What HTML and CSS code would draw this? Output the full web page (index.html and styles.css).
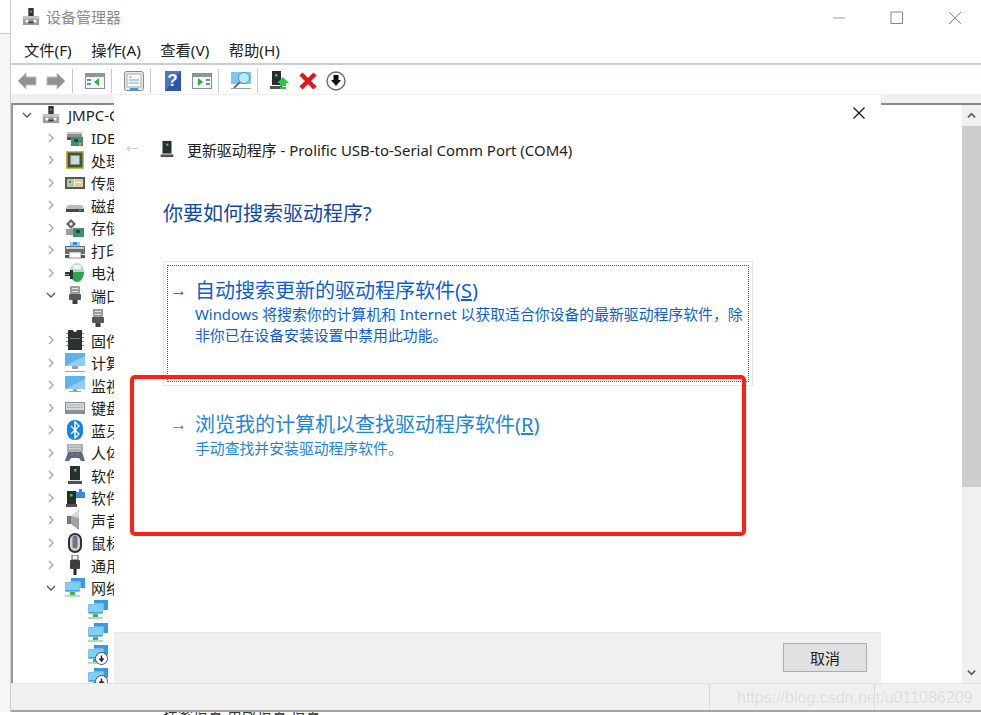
FILE: index.html
```html
<!DOCTYPE html>
<html lang="zh-CN">
<head>
<meta charset="utf-8">
<title>设备管理器</title>
<link rel="stylesheet" href="styles.css">
</head>
<body>
<svg class="defs" width="0" height="0" aria-hidden="true">
  <symbol id="i-pc" viewBox="0 0 20 20">
    <rect x="7" y="0" width="6" height="9" fill="#2f3336"/><rect x="9" y="3" width="2" height="2" fill="#35d04a"/>
    <rect x="1" y="9" width="18" height="10" fill="#9a9c9e"/><rect x="1" y="9" width="18" height="3" fill="#c4c6c8"/>
    <rect x="4" y="13" width="3" height="3" fill="#fff"/><rect x="13" y="13" width="3" height="3" fill="#fff"/><rect x="7" y="15" width="6" height="2" fill="#444"/>
  </symbol>
  <symbol id="i-ide" viewBox="0 0 20 20">
    <path d="M2 4h13l2 3v3H2z" fill="#8d9296"/><rect x="2" y="4" width="15" height="2" fill="#c8cbce"/><rect x="2" y="9" width="10" height="3" fill="#555"/>
    <rect x="6" y="9" width="12" height="9" fill="#3f8f6a"/><rect x="9" y="11" width="4" height="3" fill="#1c4f3a"/><rect x="14" y="15" width="2" height="2" fill="#d9b440"/>
  </symbol>
  <symbol id="i-cpu" viewBox="0 0 20 20">
    <rect x="1" y="1" width="18" height="18" fill="#e0ad3a"/><rect x="2.5" y="2.5" width="15" height="15" fill="#2e5f45"/><rect x="5.5" y="5.5" width="9" height="9" fill="#d2d5d3"/>
  </symbol>
  <symbol id="i-sensor" viewBox="0 0 20 20">
    <rect x="0" y="4" width="20" height="12" fill="#55595c"/><rect x="2" y="6" width="16" height="8" fill="#e3d08a"/><rect x="2" y="6" width="7" height="8" fill="#a7cf9a"/><rect x="9" y="9" width="9" height="1" fill="#fff"/><rect x="9" y="6" width="1" height="8" fill="#fff"/><rect x="4" y="8" width="2" height="2" fill="#d8504c"/>
  </symbol>
  <symbol id="i-disk" viewBox="0 0 20 20">
    <path d="M3 10h14l2 3v4H1v-4z" fill="#babcbe"/><rect x="1" y="14" width="18" height="3" fill="#45484b"/><rect x="14" y="15" width="2" height="1" fill="#5fd06a"/>
  </symbol>
  <symbol id="i-store" viewBox="0 0 20 20">
    <path d="M1 6l5-5 5 5-5 5z" fill="#5e6266"/><path d="M4 6l2-2 2 2-2 2z" fill="#eee"/><path d="M1 11h12v6H1z" fill="#9a9da0"/>
    <rect x="8" y="10" width="11" height="9" fill="#3f8f6a"/><rect x="11" y="12" width="4" height="3" fill="#1c4f3a"/>
  </symbol>
  <symbol id="i-printer" viewBox="0 0 20 20">
    <rect x="5" y="2" width="10" height="5" fill="#8fd0ee"/><rect x="8" y="2" width="4" height="3" fill="#2a8fd8"/><rect x="0" y="6" width="20" height="8" fill="#6b6f73"/><rect x="1" y="7" width="18" height="2" fill="#c9ccce"/><rect x="4" y="12" width="12" height="6" fill="#fff" stroke="#777" stroke-width=".8"/><rect x="0" y="15" width="4" height="3" fill="#555"/><rect x="16" y="15" width="4" height="3" fill="#555"/>
  </symbol>
  <symbol id="i-battery" viewBox="0 0 20 20">
    <ellipse cx="12" cy="9" rx="7" ry="9" fill="#b9d7c2"/><path d="M5 9c0 5 3 10 7 10s7-5 7-10z" fill="#2fa34b"/><ellipse cx="12" cy="4" rx="4.500" ry="2.500" fill="#eef3ef"/>
    <path d="M0 9h5v-2h3v9H5v-3H0v-1.500h4V11H0z" fill="#2e3134"/>
  </symbol>
  <symbol id="i-port" viewBox="0 0 20 20">
    <rect x="5" y="1" width="10" height="8" rx="1" fill="#9a9c9e"/><rect x="7" y="3" width="6" height="1" fill="#e5e6e7"/><rect x="7" y="6" width="6" height="1" fill="#dcdddd"/><rect x="4" y="9" width="12" height="6" rx="1" fill="#55585b"/><rect x="7.500" y="15" width="5" height="4" fill="#3a3d40"/>
  </symbol>
  <symbol id="i-chip" viewBox="0 0 20 20">
    <path d="M3 0h5a2 2 0 0 0 4 0h5v20H3z" fill="#2f3234"/><path d="M1 3h2v1H1zM1 7h2v1H1zM1 11h2v1H1zM1 15h2v1H1zM17 3h2v1h-2zM17 7h2v1h-2zM17 11h2v1h-2zM17 15h2v1h-2z" fill="#8a8d90"/><rect x="5" y="8" width="10" height="1" fill="#777"/>
  </symbol>
  <symbol id="i-monitor" viewBox="0 0 20 20">
    <rect x="0" y="1" width="20" height="13" fill="#8fcdf2"/><path d="M0 1h20v3L0 14z" fill="#5eb4ea"/><rect x="8" y="14" width="4" height="2" fill="#9ba1a5"/><rect x="4" y="16" width="12" height="1" fill="#9ba1a5"/>
  </symbol>
  <symbol id="i-computer" viewBox="0 0 20 20">
    <rect x="0" y="0" width="20" height="13" fill="#8fcdf2"/><path d="M0 0h20v3L0 13z" fill="#5eb4ea"/><rect x="7" y="13" width="6" height="3" fill="#9ba1a5"/><rect x="0" y="18" width="20" height="1" fill="#9ba1a5"/>
  </symbol>
  <symbol id="i-keyboard" viewBox="0 0 20 20">
    <rect x="0" y="4" width="20" height="12" fill="#8b8f93"/><rect x="1" y="5" width="18" height="7" fill="#d6d9db"/><path d="M2 7h16M2 9.500h16" stroke="#8b8f93" stroke-width=".8" stroke-dasharray="1.500 .8"/>
  </symbol>
  <symbol id="i-bt" viewBox="0 0 20 20">
    <rect x="2" y="0" width="16" height="20" rx="7.500" fill="#1283e8"/><path d="M6 6l8 8-4 4V2l4 4-8 8" fill="none" stroke="#fff" stroke-width="1.400"/>
  </symbol>
  <symbol id="i-hid" viewBox="0 0 20 20">
    <rect x="2" y="1" width="16" height="8" fill="#aeb2b6"/><path d="M4 3h12M4 5.500h12" stroke="#e6e7e8" stroke-dasharray="1.500 .8"/>
    <path d="M3 9h14l3 9h-4l-2-3H6l-2 3H0z" fill="#5a6b7c"/><circle cx="7" cy="11" r="1.200" fill="#d8504c"/><circle cx="13" cy="11" r="1.200" fill="#3a8de0"/>
  </symbol>
  <symbol id="i-soft" viewBox="0 0 20 20">
    <rect x="5" y="1" width="10" height="15" fill="#2b2e31"/><rect x="9" y="4" width="2.500" height="2.500" fill="#35d04a"/><rect x="3" y="16" width="14" height="3" fill="#4f5255"/><rect x="5" y="15" width="10" height="1" fill="#ddd"/>
  </symbol>
  <symbol id="i-softp" viewBox="0 0 20 20">
    <rect x="2" y="3" width="9" height="13" fill="#2b2e31"/><rect x="5" y="6" width="2.500" height="2.500" fill="#35d04a"/><rect x="1" y="16" width="11" height="3" fill="#4f5255"/>
    <path d="M11 4h3V1h3v3h3v6h-9z" fill="#2f8ee0"/>
  </symbol>
  <symbol id="i-sound" viewBox="0 0 20 20">
    <path d="M2 6h4l8-6v20l-8-6H2z" fill="#9ea2a6"/><path d="M6 6l8-6v8z" fill="#d6d8da"/><rect x="2" y="6" width="4" height="8" fill="#76797c"/>
  </symbol>
  <symbol id="i-mouse" viewBox="0 0 20 20">
    <rect x="3" y="0" width="14" height="20" rx="7" fill="#2e3134"/><rect x="5" y="2" width="10" height="16" rx="5" fill="#cfd2d5"/><rect x="7.500" y="2.500" width="5" height="13" rx="2.500" fill="#6a7580"/>
  </symbol>
  <symbol id="i-usb" viewBox="0 0 20 20">
    <rect x="7" y="0" width="6" height="5" fill="#f0f0f0" stroke="#555"/><rect x="5" y="5" width="10" height="9" rx="1" fill="#3c3f42"/><rect x="8.500" y="14" width="3" height="6" fill="#26282a"/>
  </symbol>
  <symbol id="i-net" viewBox="0 0 20 20">
    <rect x="6" y="0" width="14" height="10" fill="#3a9ae0"/><rect x="0" y="4" width="15" height="10" fill="#3da2e8" stroke="#eef7fd" stroke-width=".7"/><rect x="1" y="5" width="13" height="7" fill="#7fd0f5"/><rect x="5" y="14" width="5" height="3" fill="#3db84e"/><rect x="0" y="17" width="15" height="2" fill="#b9d9bf"/>
  </symbol>
  <symbol id="i-netd" viewBox="0 0 20 20">
    <use href="#i-net"/><circle cx="13.500" cy="13.500" r="6" fill="#fff" stroke="#555"/><path d="M13.500 10.500v4M11.500 13.500l2 2.500 2-2.500" stroke="#222" stroke-width="1.500" fill="none"/>
  </symbol>
  <symbol id="t-back" viewBox="0 0 20 20"><path d="M1 10l8-8v4h10v8H9v4z" fill="#8f9290" stroke="#bcbebc"/></symbol>
  <symbol id="t-forward" viewBox="0 0 20 20"><path d="M19 10l-8-8v4H1v8h10v4z" fill="#8f9290" stroke="#bcbebc"/></symbol>
  <symbol id="t-panelg" viewBox="0 0 20 20"><rect x=".5" y="2.500" width="19" height="15" fill="#f4f6f8" stroke="#8b9096"/><rect x="1" y="3" width="18" height="3" fill="#8f979e"/><rect x="2" y="8" width="4" height="2" fill="#5c93c8"/><rect x="2" y="12" width="4" height="2" fill="#5c93c8"/><path d="M14 7v8l-5-4z" fill="#2fae4b"/></symbol>
  <symbol id="t-props" viewBox="0 0 20 20"><rect x=".5" y=".5" width="19" height="19" rx="2" fill="#e8eaec" stroke="#84888c"/><rect x="3" y="3" width="14" height="13" fill="#fbfcfd" stroke="#a7abb0"/><path d="M5 6h3M5 9h10M5 12h10" stroke="#7aa0c4"/><rect x="6" y="17" width="8" height="2" fill="#2aa3dc"/></symbol>
  <symbol id="t-help" viewBox="0 0 20 20"><rect x="2" y="0" width="16" height="20" fill="#2f55a8"/><path d="M2 0h16L2 20z" fill="#4a74c4"/></symbol>
  <symbol id="t-panelr" viewBox="0 0 20 20"><rect x=".5" y="2.500" width="19" height="15" fill="#f4f6f8" stroke="#8b9096"/><rect x="1" y="3" width="18" height="3" fill="#8f979e"/><rect x="14" y="8" width="4" height="2" fill="#5c93c8"/><rect x="14" y="12" width="4" height="2" fill="#5c93c8"/><path d="M6 7v8l5-4z" fill="#2fae4b"/></symbol>
  <symbol id="t-scan" viewBox="0 0 20 20"><rect x="0" y="1" width="20" height="12" fill="#7ec8ee"/><circle cx="13" cy="7" r="5.500" fill="#bfe6f8" stroke="#4d9ac8"/><path d="M9 11l-6 6" stroke="#6b7075" stroke-width="2"/><rect x="0" y="17" width="20" height="1" fill="#8aa"/></symbol>
  <symbol id="t-update" viewBox="0 0 20 20"><rect x="2" y="0" width="9" height="14" fill="#2b2e31"/><rect x="5" y="3" width="2.500" height="2.500" fill="#35d04a"/><rect x="0" y="15" width="12" height="3" fill="#4f5255"/><path d="M13 6l6 6h-3v3h-6v-3H7z" fill="#2cc84a"/><rect x="10" y="16" width="6" height="2" fill="#2cc84a"/></symbol>
  <symbol id="t-x" viewBox="0 0 20 20"><path d="M3 3l14 14M17 3L3 17" stroke="#e0161c" stroke-width="4.500"/></symbol>
  <symbol id="t-down" viewBox="0 0 20 20"><circle cx="10" cy="10" r="9" fill="#fbfbfb" stroke="#6a6d70" stroke-width="1.400"/><path d="M7.500 4h5v5h2.500l-5 6-5-6h2.500z" fill="#111"/></symbol>
</svg>

<div class="page">
  <div class="strip"></div>
  <div class="window">
    <header class="titlebar">
      <svg class="title-icon"><use href="#i-pc"/></svg>
      <span class="title-text">设备管理器</span>
      <div class="win-controls">
        <svg class="wc" viewBox="0 0 14 14"><path d="M1 7h12" stroke="#9a9a9a"/></svg>
        <svg class="wc" viewBox="0 0 14 14"><rect x="1" y="1" width="11.500" height="11.500" fill="none" stroke="#8a8a8a"/></svg>
        <svg class="wc" viewBox="0 0 14 14"><path d="M1 1l12 12M13 1L1 13" stroke="#8a8a8a"/></svg>
      </div>
    </header>
    <nav class="menubar">
      <span>文件(F)</span><span>操作(A)</span><span>查看(V)</span><span>帮助(H)</span>
    </nav>
    <div class="toolbar">
      <svg class="tool"><use href="#t-back"/></svg>
      <svg class="tool"><use href="#t-forward"/></svg>
      <i class="sep"></i>
      <svg class="tool"><use href="#t-panelg"/></svg>
      <i class="sep"></i>
      <svg class="tool"><use href="#t-props"/></svg>
      <i class="sep"></i>
      <span class="tool help"><svg class="help-bg"><use href="#t-help"/></svg><b class="help-q">?</b></span>
      <svg class="tool"><use href="#t-panelr"/></svg>
      <i class="sep"></i>
      <svg class="tool"><use href="#t-scan"/></svg>
      <i class="sep"></i>
      <svg class="tool tight"><use href="#t-update"/></svg>
      <svg class="tool tight"><use href="#t-x"/></svg>
      <svg class="tool"><use href="#t-down"/></svg>
    </div>
    <div class="band"></div>
    <main class="content">
      <div class="tree">
        <div class="row root"><svg class="chev" viewBox="0 0 10 10"><path d="M1 3l4 4 4-4"/></svg><svg class="ic"><use href="#i-pc"/></svg><span>JMPC-GHK</span></div>
        <div class="row"><svg class="chev" viewBox="0 0 10 10"><path d="M3 1l4 4-4 4"/></svg><svg class="ic"><use href="#i-ide"/></svg><span>IDE ATA/ATAPI 控制器</span></div>
        <div class="row"><svg class="chev" viewBox="0 0 10 10"><path d="M3 1l4 4-4 4"/></svg><svg class="ic"><use href="#i-cpu"/></svg><span>处理器</span></div>
        <div class="row"><svg class="chev" viewBox="0 0 10 10"><path d="M3 1l4 4-4 4"/></svg><svg class="ic"><use href="#i-sensor"/></svg><span>传感器</span></div>
        <div class="row"><svg class="chev" viewBox="0 0 10 10"><path d="M3 1l4 4-4 4"/></svg><svg class="ic"><use href="#i-disk"/></svg><span>磁盘驱动器</span></div>
        <div class="row"><svg class="chev" viewBox="0 0 10 10"><path d="M3 1l4 4-4 4"/></svg><svg class="ic"><use href="#i-store"/></svg><span>存储控制器</span></div>
        <div class="row"><svg class="chev" viewBox="0 0 10 10"><path d="M3 1l4 4-4 4"/></svg><svg class="ic"><use href="#i-printer"/></svg><span>打印队列</span></div>
        <div class="row"><svg class="chev" viewBox="0 0 10 10"><path d="M3 1l4 4-4 4"/></svg><svg class="ic"><use href="#i-battery"/></svg><span>电池</span></div>
        <div class="row"><svg class="chev dark" viewBox="0 0 10 10"><path d="M1 3l4 4 4-4"/></svg><svg class="ic"><use href="#i-port"/></svg><span>端口 (COM 和 LPT)</span></div>
        <div class="row child"><svg class="ic"><use href="#i-port"/></svg></div>
        <div class="row"><svg class="chev" viewBox="0 0 10 10"><path d="M3 1l4 4-4 4"/></svg><svg class="ic"><use href="#i-chip"/></svg><span>固件</span></div>
        <div class="row"><svg class="chev" viewBox="0 0 10 10"><path d="M3 1l4 4-4 4"/></svg><svg class="ic"><use href="#i-computer"/></svg><span>计算机</span></div>
        <div class="row"><svg class="chev" viewBox="0 0 10 10"><path d="M3 1l4 4-4 4"/></svg><svg class="ic"><use href="#i-monitor"/></svg><span>监视器</span></div>
        <div class="row"><svg class="chev" viewBox="0 0 10 10"><path d="M3 1l4 4-4 4"/></svg><svg class="ic"><use href="#i-keyboard"/></svg><span>键盘</span></div>
        <div class="row"><svg class="chev" viewBox="0 0 10 10"><path d="M3 1l4 4-4 4"/></svg><svg class="ic"><use href="#i-bt"/></svg><span>蓝牙</span></div>
        <div class="row"><svg class="chev" viewBox="0 0 10 10"><path d="M3 1l4 4-4 4"/></svg><svg class="ic"><use href="#i-hid"/></svg><span>人体学输入设备</span></div>
        <div class="row"><svg class="chev" viewBox="0 0 10 10"><path d="M3 1l4 4-4 4"/></svg><svg class="ic"><use href="#i-soft"/></svg><span>软件设备</span></div>
        <div class="row"><svg class="chev" viewBox="0 0 10 10"><path d="M3 1l4 4-4 4"/></svg><svg class="ic"><use href="#i-softp"/></svg><span>软件组件</span></div>
        <div class="row"><svg class="chev" viewBox="0 0 10 10"><path d="M3 1l4 4-4 4"/></svg><svg class="ic"><use href="#i-sound"/></svg><span>声音、视频和游戏控制器</span></div>
        <div class="row"><svg class="chev" viewBox="0 0 10 10"><path d="M3 1l4 4-4 4"/></svg><svg class="ic"><use href="#i-mouse"/></svg><span>鼠标和其他指针设备</span></div>
        <div class="row"><svg class="chev" viewBox="0 0 10 10"><path d="M3 1l4 4-4 4"/></svg><svg class="ic"><use href="#i-usb"/></svg><span>通用串行总线控制器</span></div>
        <div class="row"><svg class="chev dark" viewBox="0 0 10 10"><path d="M1 3l4 4 4-4"/></svg><svg class="ic"><use href="#i-net"/></svg><span>网络适配器</span></div>
        <div class="row child"><svg class="ic"><use href="#i-net"/></svg></div>
        <div class="row child"><svg class="ic"><use href="#i-net"/></svg></div>
        <div class="row child"><svg class="ic"><use href="#i-netd"/></svg></div>
        <div class="row child"><svg class="ic"><use href="#i-netd"/></svg></div>
      </div>
      <aside class="scrollbar">
        <svg class="sb-btn" viewBox="0 0 10 10"><path d="M1 7l4-4 4 4"/></svg>
        <div class="sb-track"><div class="sb-thumb"></div></div>
        <svg class="sb-btn" viewBox="0 0 10 10"><path d="M1 3l4 4 4-4"/></svg>
      </aside>
    </main>
    <footer class="statusbar"><i class="status-div"></i><i class="status-div second"></i></footer>
  </div>
</div>
<div class="under">搜索设置 更改设置 设置</div>

<section class="dialog">
  <svg class="dlg-close" viewBox="0 0 12 12"><path d="M.5.5l11 11M11.500.5l-11 11"/></svg>
  <div class="dlg-head">
    <span class="dlg-back">←</span>
    <svg class="dlg-icon"><use href="#i-soft"/></svg>
    <span class="dlg-title">更新驱动程序 - Prolific USB-to-Serial Comm Port (COM4)</span>
  </div>
  <h1 class="dlg-question">你要如何搜索驱动程序?</h1>
  <div class="option focused">
    <div class="option-inner">
      <div class="option-title"><span class="arrow">→</span><span>自动搜索更新的驱动程序软件(<u>S</u>)</span></div>
      <p class="option-desc">Windows 将搜索你的计算机和 Internet 以获取适合你设备的最新驱动程序软件，除非你已在设备安装设置中禁用此功能。</p>
    </div>
  </div>
  <div class="option hover">
    <div class="option-inner">
      <div class="option-title"><span class="arrow">→</span><span>浏览我的计算机以查找驱动程序软件(<u>R</u>)</span></div>
      <p class="option-desc">手动查找并安装驱动程序软件。</p>
    </div>
  </div>
  <div class="dlg-footer"><button class="cancel">取消</button></div>
</section>

<div class="annotation"></div>
<div class="watermark">https://blog.csdn.net/u011086209</div>
</body>
</html>
```
FILE: styles.css
```css
* { box-sizing: border-box; }
html, body { margin: 0; padding: 0; }
body {
  position: relative;
  width: 981px;
  height: 715px;
  overflow: hidden;
  background: #fff;
  font-family: "Noto Sans", "Noto Sans CJK SC", sans-serif;
  color: #1a1a1a;
}
.defs { position: absolute; }
.page { display: flex; height: 712px; }
.strip { width: 10px; margin-top: 33px; background: #f5f6f8; border-top: 1px solid #c9c9c9; }
.window { flex: 1; display: flex; flex-direction: column; min-width: 0; border-left: 1px solid #cfcfcf; background: #fff; }

.titlebar { height: 33px; display: flex; align-items: center; padding-left: 11px; flex: none; }
.title-icon { width: 18px; height: 18px; margin-right: 6px; }
.title-text { font-size: 15px; color: #8c8c8c; }
.win-controls { margin-left: auto; display: flex; gap: 44px; padding-right: 19px; padding-top: 2px; }
.wc { width: 14px; height: 14px; display: block; }

.menubar { height: 32px; display: flex; flex: none; align-items: center; gap: 19.500px; padding: 2px 0 0 13px; font-size: 15.300px; border-bottom: 2px solid #c9ced6; color: #222; }

.toolbar { height: 29px; flex: none; display: flex; align-items: center; padding: 2px 0 0 1px; background: #fff; }
.tool { width: 20px; height: 20px; margin: 0 4.500px; flex: none; display: block; }
.tool.tight { margin-right: 3.500px; }
.sep { width: 1px; height: 24px; background: #c8c8c8; margin: 0 7px 0 2px; flex: none; }
.help { position: relative; background: none; }
.help-bg { width: 20px; height: 20px; display: block; }
.help-q { position: absolute; inset: 0; text-align: center; font: bold 17px/20px "Liberation Sans", sans-serif; color: #fff; }

.band { height: 9px; flex: none; background: #f0f0f0; }

.content { flex: 1; min-height: 0; display: flex; border-top: 2px solid #8a8a8a; border-left: 2px solid #9a9a9a; }
.tree { flex: 1; min-width: 0; overflow: hidden; background: #fff; padding-bottom: 1px; }
.tree .row:first-child { margin-top: -1px; }
.row { height: 22.500px; display: flex; align-items: center; padding-left: 33px; font-size: 15px; white-space: nowrap; color: #222; }
.row.root { padding-left: 9px; }
.row.child { padding-left: 75px; }
.row.child .ic { margin-left: 0; }
.row .ic { width: 20px; height: 20px; flex: none; margin: 0 6px 0 9px; }
.row.root .ic { width: 18px; height: 18px; margin: 0 8px 0 10px; }
.chev { width: 10px; height: 10px; flex: none; }
.chev path { fill: none; stroke: #a6a6a6; stroke-width: 1.300; }
.chev.dark path, .root .chev path { stroke: #555; }

.scrollbar { width: 19px; flex: none; display: flex; flex-direction: column; background: #f0f0f0; }
.sb-btn { height: 21px; width: 19px; padding: 6px 4px; flex: none; }
.sb-btn path { fill: none; stroke: #606060; stroke-width: 2; }
.sb-track { flex: 1; }
.sb-thumb { height: 361px; background: #cdcdcd; }

.statusbar { height: 29px; flex: none; background: #f0f0f0; border-top: 1px solid #e4e4e4; border-bottom: 2px solid #a5a5a5; display: flex; }
.status-div { width: 1px; background: #d9d9d9; margin-left: 698px; }
.status-div.second { margin-left: 164px; }

.under { height: 3px; padding: 0 0 0 163px; overflow: hidden; font-size: 15px; line-height: 3px; color: #333; white-space: nowrap; }

.dialog {
  position: absolute;
  left: 114px; top: 95px;
  width: 767px; height: 588px;
  background: #fff;
  display: flex; flex-direction: column;
}
.dlg-close { position: absolute; right: 16px; top: 12px; width: 12px; height: 12px; }
.dlg-close path { stroke: #111; stroke-width: 1.200; fill: none; }
.dlg-head { display: flex; align-items: center; height: 24px; margin-top: 42px; padding-left: 12px; flex: none; }
.dlg-back { width: 33px; color: #c8c8c8; font-size: 12px; }
.dlg-icon { width: 18px; height: 18px; margin-right: 11px; margin-left: -1px; flex: none; }
.dlg-title { font-size: 14.950px; color: #222; white-space: nowrap; }
.dlg-question { margin: 38px 0 0 49px; font-size: 20px; line-height: 30px; font-weight: 400; color: #0f47a8; flex: none; }

.option { margin: 32px 0 0 49px; width: 590px; flex: none; }
.option.focused { height: 125px; padding: 3px; border: 1px solid #e6e6e6; }
.option.focused .option-inner { height: 100%; border: 1px dotted #666; padding: 10px 0 0 4px; color: #0a5fd6; }
.option.hover { margin-top: 9px; padding: 15px 3px 0 3px; }
.option.hover .option-inner { padding: 0 0 0 6px; color: #1a86e0; }
.option-title { display: flex; align-items: center; font-size: 20px; line-height: 30px; white-space: nowrap; }
.arrow { width: 25px; margin-left: -2px; font-size: 17px; font-family: "Liberation Sans", sans-serif; flex: none; }
.option-desc { margin: -2px 0 0 23px; width: 552px; font-size: 14.850px; line-height: 21px; }

.dlg-footer { margin-top: auto; height: 51px; flex: none; background: #f0f0f0; border-top: 1px solid #e8e8e8; display: flex; justify-content: flex-end; align-items: flex-start; padding: 10px 14px 0 0; }
.cancel { width: 84px; height: 29px; background: #e1e1e1; border: 1px solid #adadad; font: 15px "Noto Sans CJK SC", sans-serif; color: #222; padding: 0; }

.annotation {
  position: absolute;
  left: 130px; top: 375px;
  width: 616px; height: 161px;
  border: 4px solid #ff2012;
  border-radius: 5px;
}
.watermark {
  position: absolute;
  left: 737px; top: 689px;
  font: 16px/18px "Liberation Sans", sans-serif;
  color: #dcdcdc;
  text-shadow: 0 0 1px #fff;
  white-space: nowrap;
}
```
